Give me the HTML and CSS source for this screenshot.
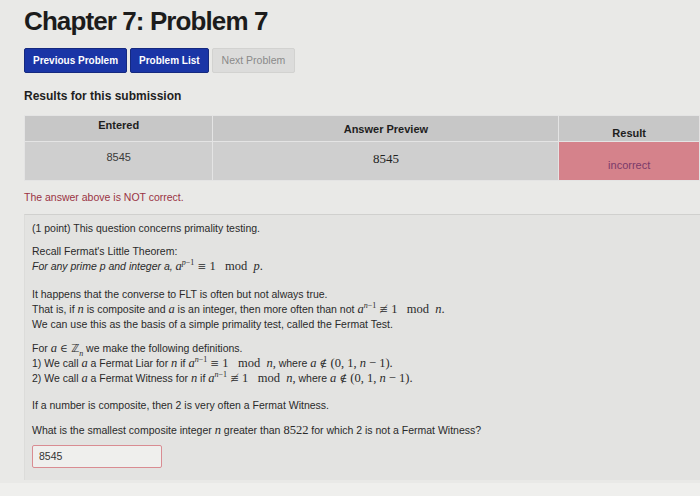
FILE: index.html
```html
<!DOCTYPE html>
<html>
<head>
<meta charset="utf-8">
<link rel="stylesheet" href="styles.css">
</head>
<body>
<div class="page">
  <h1 class="title">Chapter 7: Problem 7</h1>
  <div class="nav">
    <span class="btn btn-primary">Previous Problem</span>
    <span class="btn btn-primary">Problem List</span>
    <span class="btn btn-disabled">Next Problem</span>
  </div>
  <h2 class="results-title">Results for this submission</h2>
  <table class="results">
    <tr class="head">
      <th class="c1"><div class="cell h-top">Entered</div></th>
      <th class="c2"><div class="cell h-mid">Answer Preview</div></th>
      <th class="c3"><div class="cell h-low">Result</div></th>
    </tr>
    <tr class="body">
      <td class="c1"><div class="cell b-top">8545</div></td>
      <td class="c2"><div class="cell b-mid math-cell">8545</div></td>
      <td class="c3 bad"><div class="cell b-low">incorrect</div></td>
    </tr>
  </table>
  <p class="verdict">The answer above is NOT correct.</p>
  <div class="problem">
    <p class="p1">(1 point) This question concerns primality testing.</p>
    <p class="p2">Recall Fermat's Little Theorem:<br>
      <em>For any prime p and integer a,</em> <span class="m"><i>a</i><sup><i>p</i>−1</sup> <span class="sym">≡</span> 1 &nbsp; mod &nbsp;<i>p</i>.</span></p>
    <p class="p3">It happens that the converse to FLT is often but not always true.<br>
      That is, if <span class="m"><i>n</i></span> is composite and <span class="m"><i>a</i></span> is an integer, then more often than not <span class="m"><i>a</i><sup><i>n</i>−1</sup> <span class="sym">≢</span> 1 &nbsp; mod &nbsp;<i>n</i>.</span><br>
      We can use this as the basis of a simple primality test, called the Fermat Test.</p>
    <p class="p4">For <span class="m"><i>a</i> <span class="sym">∈</span> <span class="bb">ℤ</span><sub><i>n</i></sub></span> we make the following definitions.<br>
      1) We call <span class="m"><i>a</i></span> a Fermat Liar for <span class="m"><i>n</i></span> if <span class="m"><i>a</i><sup><i>n</i>−1</sup> <span class="sym">≡</span> 1 &nbsp; mod &nbsp;<i>n</i>,</span> where <span class="m"><i>a</i> <span class="sym">∉</span> (0, 1, <i>n</i> − 1).</span><br>
      2) We call <span class="m"><i>a</i></span> a Fermat Witness for <span class="m"><i>n</i></span> if <span class="m"><i>a</i><sup><i>n</i>−1</sup> <span class="sym">≢</span> 1 &nbsp; mod &nbsp;<i>n</i>,</span> where <span class="m"><i>a</i> <span class="sym">∉</span> (0, 1, <i>n</i> − 1).</span></p>
    <p class="p5">If a number is composite, then 2 is very often a Fermat Witness.</p>
    <p class="p6">What is the smallest composite integer <span class="m"><i>n</i></span> greater than <span class="m">8522</span> for which 2 is not a Fermat Witness?</p>
    <div class="answer">8545</div>
  </div>
</div>
</body>
</html>
```
FILE: styles.css
```css
html, body {
  margin: 0;
  padding: 0;
  background: #e9e9e7;
}
body {
  font-family: "Liberation Sans", Arial, sans-serif;
  color: #2a2a2a;
  min-height: 496px;
  background: linear-gradient(to bottom, #e9e9e7 0, #e9e9e7 483px, #efefed 483px);
}
.page {
  padding: 6px 0 0 24px;
}
.title {
  margin: 0;
  font-size: 26px;
  line-height: 30px;
  font-weight: bold;
  letter-spacing: -0.9px;
  color: #1c1c1c;
}
.nav {
  display: flex;
  gap: 3px;
  margin-top: 12px;
  align-items: center;
}
.btn {
  display: inline-block;
  font-size: 10px;
  line-height: 23px;
  padding: 0 8px;
  border-radius: 2px;
}
.btn-primary {
  background: #1a35a6;
  color: #ffffff;
  font-weight: bold;
  border: 1px solid #15297f;
}
.btn-disabled {
  background: #dcdcdb;
  color: #8a8a8a;
  border: 1px solid #d2d2d0;
  padding: 0 9px;
  font-size: 10.5px;
}
.results-title {
  margin: 15px 0 0 0;
  font-size: 12px;
  line-height: 16px;
  font-weight: bold;
  color: #1e1e1e;
}
.results {
  margin-top: 11px;
  border-collapse: collapse;
  width: 676px;
  font-size: 11px;
}
.results th, .results td {
  border: 1px solid #e4e4e4;
  text-align: center;
  padding: 0;
  vertical-align: top;
}
.cell {
  box-sizing: border-box;
  line-height: 13px;
}
.results .head th {
  background: #c7c7c7;
  font-weight: bold;
  color: #1e1e1e;
}
.head .cell { height: 25px; }
.h-top { padding-top: 3px; }
.h-mid { padding-top: 7px; }
.h-low { padding-top: 11px; }
.results .body td {
  background: #cfcfcf;
  color: #3a3a3a;
}
.body .cell { height: 38px; }
.b-top { padding-top: 9px; }
.b-mid { padding-top: 10px; }
.b-low { padding-top: 17px; }
.c1 { width: 188px; }
.c2 { width: 346px; }
.c3 { width: 140px; }
.math-cell {
  font-family: "Liberation Serif", "Times New Roman", serif;
  font-size: 13px;
  color: #222;
}
.results .body .bad {
  background: #d5828b;
  color: #7a3a6a;
}
.verdict {
  margin: 9px 0 0 0;
  font-size: 10.5px;
  line-height: 14px;
  color: #9a3344;
}
.problem {
  margin-top: 10px;
  background: #e3e3e1;
  border-top: 1px solid #d0d0ce;
  border-left: 1px solid #dcdcda;
  padding: 6px 0 12px 7px;
  font-size: 10.5px;
  line-height: 15px;
  color: #2a2a2a;
}
.problem p {
  margin: 0;
}
.problem .p1 { margin-bottom: 8px; }
.problem .p2 { margin-bottom: 13px; }
.problem .p3 { margin-bottom: 9px; }
.problem .p4 { margin-bottom: 12px; }
.problem .p5 { margin-bottom: 10px; }
.problem .p6 { margin-bottom: 7px; }
.problem em {
  font-style: italic;
}
.m {
  font-family: "Liberation Serif", "Times New Roman", serif;
  font-size: 12.5px;
  line-height: 12px;
}
.m i {
  font-style: italic;
}
.m sup, .m sub {
  font-size: 8px;
  line-height: 0;
}
.sym {
  font-family: "DejaVu Serif", serif;
  font-size: 10.5px;
}
.bb {
  font-family: "DejaVu Sans", sans-serif;
  font-size: 11px;
}
.answer {
  width: 122px;
  height: 21px;
  line-height: 21px;
  padding-left: 6px;
  border: 1px solid #d98c92;
  background: #efefed;
  border-radius: 2px;
  font-size: 10.5px;
  color: #333;
}
```
